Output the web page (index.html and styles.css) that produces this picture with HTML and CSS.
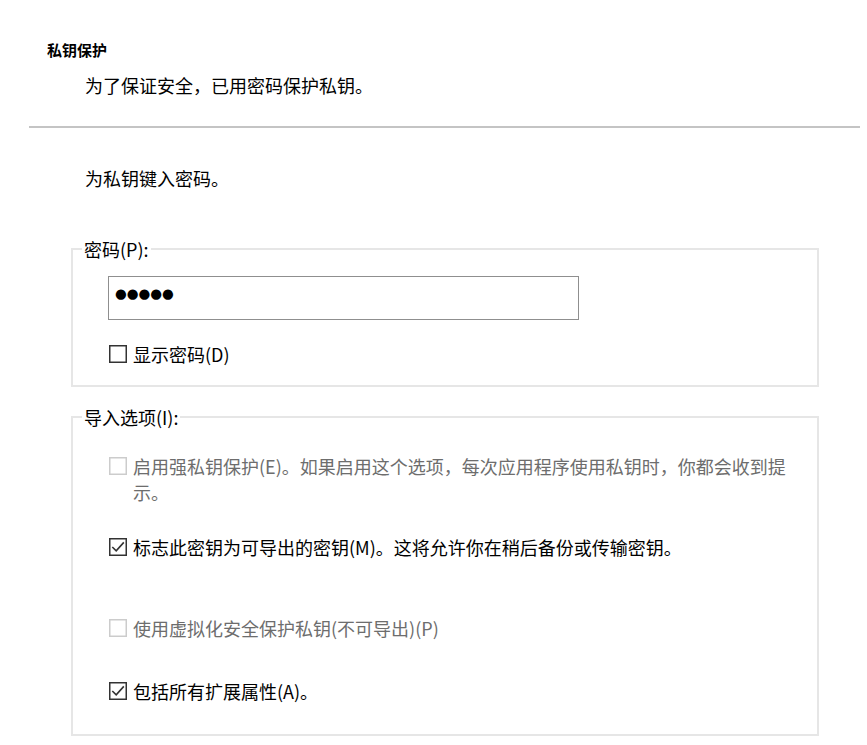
FILE: index.html
```html
<!DOCTYPE html>
<html lang="zh-CN">
<head>
    <meta charset="UTF-8">
    <title>私钥保护</title>
    <link rel="stylesheet" href="styles.css">
</head>
<body>
    <div class="header">
        <div class="title">私钥保护</div>
        <div class="subtitle">为了保证安全，已用密码保护私钥。</div>
    </div>
    <div class="separator"></div>

    <div class="content">
        <p class="intro">为私钥键入密码。</p>

        <!-- 密码 -->
        <fieldset class="group group-password">
            <legend>密码(P):</legend>
            <div class="password-box">●●●●●</div>
            <label class="option">
                <svg class="check" width="18" height="18" viewBox="0 0 18 18"><rect x="0.75" y="0.75" width="16.5" height="16.5" fill="#fff" stroke="#333" stroke-width="1.5"/></svg>
                <span>显示密码(D)</span>
            </label>
        </fieldset>

        <!-- 导入选项 -->
        <fieldset class="group group-import">
            <legend>导入选项(I):</legend>
            <label class="option disabled slot">
                <svg class="check" width="18" height="18" viewBox="0 0 18 18"><rect x="0.75" y="0.75" width="16.5" height="16.5" fill="#fff" stroke="#cccccc" stroke-width="1.5"/></svg>
                <span>启用强私钥保护(E)。如果启用这个选项，每次应用程序使用私钥时，你都会收到提示。</span>
            </label>
            <label class="option slot">
                <svg class="check" width="18" height="18" viewBox="0 0 18 18"><rect x="0.75" y="0.75" width="16.5" height="16.5" fill="#fff" stroke="#333" stroke-width="1.5"/><path d="M3.3 9 L7.2 12.9 L14.8 4.4" fill="none" stroke="#333" stroke-width="1.6"/></svg>
                <span>标志此密钥为可导出的密钥(M)。这将允许你在稍后备份或传输密钥。</span>
            </label>
            <label class="option disabled slot-short">
                <svg class="check" width="18" height="18" viewBox="0 0 18 18"><rect x="0.75" y="0.75" width="16.5" height="16.5" fill="#fff" stroke="#cccccc" stroke-width="1.5"/></svg>
                <span>使用虚拟化安全保护私钥(不可导出)(P)</span>
            </label>
            <label class="option">
                <svg class="check" width="18" height="18" viewBox="0 0 18 18"><rect x="0.75" y="0.75" width="16.5" height="16.5" fill="#fff" stroke="#333" stroke-width="1.5"/><path d="M3.3 9 L7.2 12.9 L14.8 4.4" fill="none" stroke="#333" stroke-width="1.6"/></svg>
                <span>包括所有扩展属性(A)。</span>
            </label>
        </fieldset>
    </div>
</body>
</html>
```

FILE: styles.css
```css
html, body {
    margin: 0;
    padding: 0;
    background: #fff;
}
body {
    font-family: "Noto Sans CJK SC", "Noto Sans", sans-serif;
    font-size: 18px;
    line-height: 26px;
    color: #000;
    overflow: hidden;
}
.header {
    padding: 40px 0 0 47px;
}
.title {
    font-size: 15px;
    font-weight: bold;
    line-height: 20px;
}
.subtitle {
    margin: 12px 0 0 38px;
}
.separator {
    height: 2px;
    background: #c4c4c4;
    margin: 28px 7px 0 29px;
}
.content {
    padding-top: 37px;
}
.intro {
    margin: 0 0 45px 85px;
}
.group {
    margin: 0 48px 0 71px;
    border: 2px solid #e6e6e6;
    padding: 14px 22px 18px 9px;
}
.group legend {
    padding: 0 2px;
    line-height: 26px;
}
.group-import {
    margin-top: 17px;
    padding: 23px 22px 30px 9px;
}
.password-box {
    width: 463px;
    height: 42px;
    margin-left: 26px;
    padding-left: 6px;
    border: 1px solid #8f8f8f;
    font-family: "DejaVu Sans", sans-serif;
    font-size: 13.5px;
    line-height: 32px;
    padding-bottom: 10px;
    height: 32px;
}
.group-password .option {
    margin-top: 21px;
}
.option {
    display: flex;
    align-items: flex-start;
    margin-left: 27px;
}
.option .check {
    flex: none;
    margin: 4px 6px 0 0;
}
.option.disabled {
    color: #6d6d6d;
}
.slot {
    min-height: 81px;
}
.slot-short {
    min-height: 63px;
}
```
